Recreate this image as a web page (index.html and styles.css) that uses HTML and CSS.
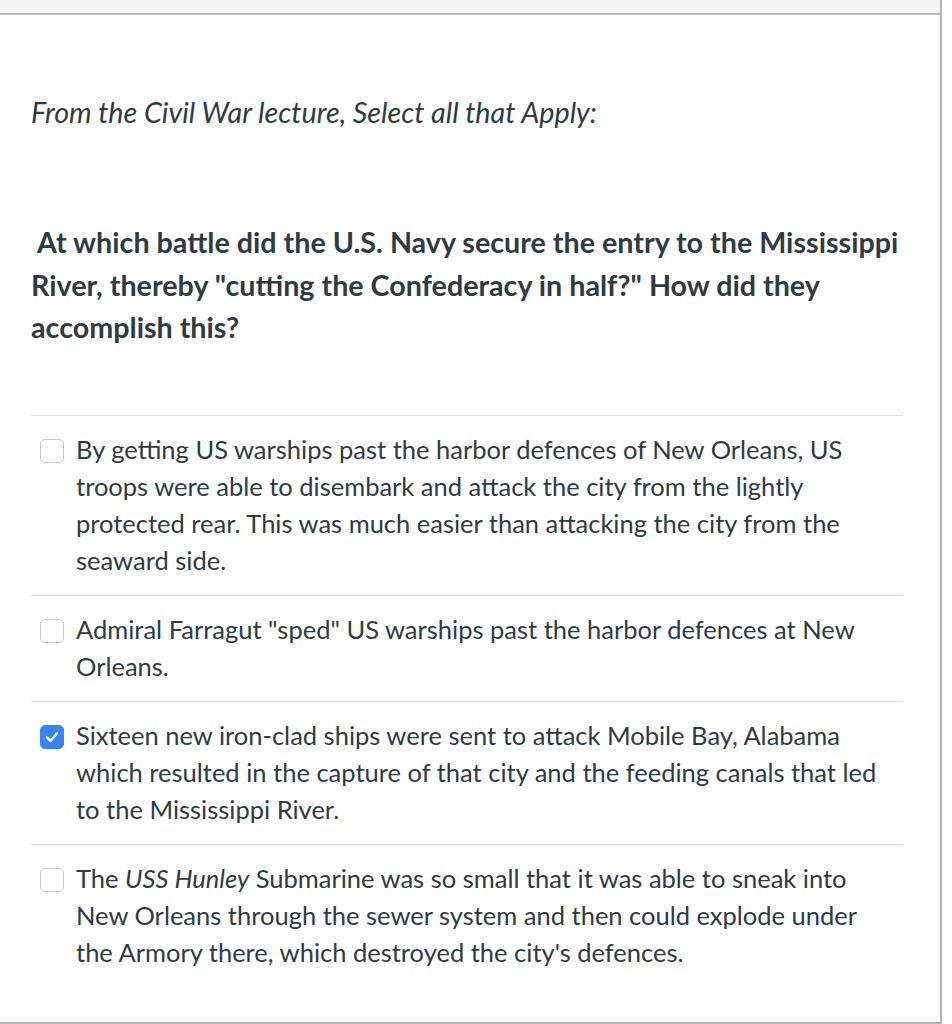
FILE: index.html
```html
<!DOCTYPE html>
<html lang="en">
<head>
<meta charset="utf-8">
<title>Quiz question</title>
<link rel="stylesheet" href="styles.css">
</head>
<body>
<div class="frame">
  <div class="topbar"></div>
  <div class="content">
    <p class="intro">From the Civil War lecture, Select all that Apply:</p>
    <p class="question">&nbsp;At which battle did the U.S. Navy secure the entry to the Mississippi River, thereby "cutting the Confederacy in half?" How did they accomplish this?</p>
    <ul class="answers">
      <li class="answer">
        <span class="box"></span>
        <span class="text">By getting US warships past the harbor defences of New Orleans, US troops were able to disembark and attack the city from the lightly protected rear. This was much easier than attacking the city from the seaward side.</span>
      </li>
      <li class="answer">
        <span class="box"></span>
        <span class="text">Admiral Farragut "sped" US warships past the harbor defences at New Orleans.</span>
      </li>
      <li class="answer">
        <span class="box checked"><svg viewBox="0 0 24 24" width="24" height="24"><path d="M6.5 12.5 L10.3 16.3 L17.5 8" fill="none" stroke="#fff" stroke-width="2.6" stroke-linecap="round" stroke-linejoin="round"/></svg></span>
        <span class="text">Sixteen new iron-clad ships were sent to attack Mobile Bay, Alabama which resulted in the capture of that city and the feeding canals that led to the Mississippi River.</span>
      </li>
      <li class="answer">
        <span class="box"></span>
        <span class="text">The <em>USS Hunley</em> Submarine was so small that it was able to sneak into New Orleans through the sewer system and then could explode under the Armory there, which destroyed the city's defences.</span>
      </li>
    </ul>
  </div>
</div>
</body>
</html>
```

FILE: styles.css
```css
html, body {
  margin: 0;
  padding: 0;
  background: #ffffff;
}
body {
  font-family: Lato, "Open Sans", "Liberation Sans", sans-serif;
  color: #2d3b45;
}
.frame {
  width: 940px;
  height: 1022px;
  border-right: 2px solid #b4b4b4;
  border-bottom: 2px solid #b4b4b4;
  overflow: hidden;
}
.topbar {
  height: 13px;
  background: #f4f4f4;
  border-bottom: 2px solid #b9b9b9;
}
.content {
  padding: 0 37px 0 31px;
}
.intro {
  margin: 76px 0 0;
  font-size: 28.7px;
  line-height: 43px;
  font-style: italic;
}
.question {
  margin: 87px -8px 0 0;
  font-size: 28.7px;
  line-height: 42.5px;
  font-weight: bold;
}
.answers {
  list-style: none;
  margin: 66px 0 0;
  padding: 0;
  border-top: 1px solid #dcdfe1;
}
.answer {
  display: flex;
  align-items: flex-start;
  gap: 12px;
  padding: 15.5px 13px 15.5px 9px;
  border-bottom: 1px solid #dcdfe1;
}
.answer:last-child {
  border-bottom: none;
}
.box {
  flex: none;
  width: 22px;
  height: 22px;
  margin-top: 7.5px;
  border: 1.5px solid #c5cace;
  border-radius: 5px;
  background: #fff;
  display: flex;
  align-items: center;
  justify-content: center;
}
.box.checked {
  background: #3a85f4;
  border-color: #3a85f4;
}
.box svg {
  display: block;
}
.text {
  font-size: 25.5px;
  line-height: 37px;
}
```
